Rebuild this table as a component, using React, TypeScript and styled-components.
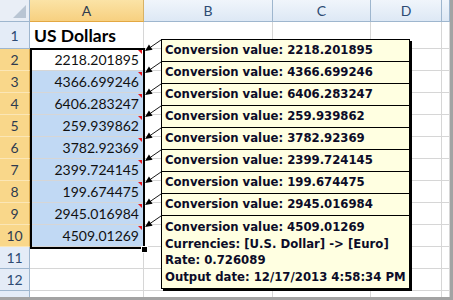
import styled, { createGlobalStyle } from 'styled-components'

const GlobalStyle = createGlobalStyle`
  html, body {
    margin: 0;
    padding: 0;
    background: #a3a3a3;
  }
  body {
    width: 453px;
    height: 300px;
    overflow: hidden;
  }
`

const gridLine = '#d6d6d6'
const headLine = '#9eb6ce'

const Wrap = styled.div`
  position: relative;
  width: 450px;
  height: 297px;
  background: #fff;
  overflow: hidden;
`

const Sheet = styled.div`
  display: grid;
  grid-template-columns: 30px 114px 129px 98px 71px 8px;
  grid-template-rows: 22px 27px repeat(11, 22px) 8px;
  font-family: Lato, "Open Sans", sans-serif;
`

const Corner = styled.div`
  position: relative;
  background: #e9eef6;
  border-right: 1px solid ${headLine};
  border-bottom: 1px solid ${headLine};
  &::after {
    content: '';
    position: absolute;
    right: 3px;
    bottom: 3px;
    border-left: 13px solid transparent;
    border-bottom: 13px solid #b9c5d3;
  }
`

const ColHead = styled.div<{ $active?: boolean }>`
  display: flex;
  align-items: center;
  justify-content: center;
  font-size: 14px;
  color: ${p => (p.$active ? '#2f3b4f' : '#2d4a73')};
  background: ${p =>
    p.$active
      ? 'linear-gradient(#fbe3a6, #f7d080)'
      : 'linear-gradient(#f0f5fb, #dde8f5)'};
  border-right: 1px solid ${p => (p.$active ? '#d8b265' : headLine)};
  border-bottom: 1px solid ${p => (p.$active ? '#e3a842' : headLine)};
`

const RowHead = styled.div<{ $active?: boolean }>`
  display: flex;
  align-items: center;
  justify-content: center;
  font-size: 14px;
  color: ${p => (p.$active ? '#2f3b4f' : '#2d4a73')};
  background: ${p => (p.$active ? '#f9d78a' : '#e4ecf7')};
  border-right: 1px solid ${p => (p.$active ? '#d8a84c' : headLine)};
  border-bottom: 1px solid ${p => (p.$active ? '#fbe6b6' : headLine)};
`

const Cell = styled.div<{ $fill?: string; $note?: boolean }>`
  position: relative;
  display: flex;
  align-items: center;
  justify-content: flex-end;
  padding-right: 4px;
  font-size: 14px;
  color: #111;
  background: ${p => p.$fill || '#fff'};
  border-right: 1px solid ${gridLine};
  border-bottom: 1px solid ${gridLine};
  &::after {
    content: '';
    display: ${p => (p.$note ? 'block' : 'none')};
    position: absolute;
    top: 1px;
    right: 1px;
    border-left: 4px solid transparent;
    border-top: 4px solid #e8141b;
  }
`

const Title = styled(Cell)`
  justify-content: flex-start;
  padding-left: 4px;
  font-size: 17.5px;
  font-weight: 700;
  color: #000;
`

const Selection = styled.div`
  position: absolute;
  left: 30px;
  top: 48px;
  width: 115px;
  height: 201px;
  box-sizing: border-box;
  border: 2.5px solid #000;
  pointer-events: none;
`

const FillHandle = styled.div`
  position: absolute;
  left: 141px;
  top: 246px;
  width: 5px;
  height: 5px;
  background: #000;
  border: 1px solid #fff;
`

const Notes = styled.div`
  position: absolute;
  left: 161px;
  top: 39px;
  width: 249px;
  display: flex;
  flex-direction: column;
`

const Note = styled.div<{ $tall?: boolean }>`
  box-sizing: border-box;
  min-height: 23px;
  margin-top: -1px;
  padding: ${p => (p.$tall ? '3px 0 3px 3px' : '0 0 0 3px')};
  display: flex;
  flex-direction: column;
  justify-content: center;
  background: #ffffe1;
  border: 1px solid #000;
  box-shadow: 2px 2px 0 #000;
  font-family: "DejaVu Sans", Verdana, sans-serif;
  font-size: 11.7px;
  font-weight: 700;
  line-height: 16.5px;
  color: #0c0c28;
  white-space: nowrap;
  &:first-child {
    margin-top: 0;
  }
`

const Arrows = styled.svg`
  position: absolute;
  left: 0;
  top: 0;
  pointer-events: none;
`

const values = [
  '2218.201895',
  '4366.699246',
  '6406.283247',
  '259.939862',
  '3782.92369',
  '2399.724145',
  '199.674475',
  '2945.016984',
  '4509.01269',
]

const cols = ['A', 'B', 'C', 'D', '']

function Arrow({ k }: { k: number }) {
  const sx = 161
  const sy = 40 + 22 * k
  const tx = 145
  const ty = 51 + 22 * k
  const dx = tx - sx
  const dy = ty - sy
  const len = Math.hypot(dx, dy)
  const ux = dx / len
  const uy = dy / len
  const bx = tx - ux * 7
  const by = ty - uy * 7
  const head = `${tx},${ty} ${bx - uy * 3.2},${by + ux * 3.2} ${bx + uy * 3.2},${by - ux * 3.2}`
  return (
    <g>
      <line x1={sx} y1={sy} x2={bx} y2={by} stroke="#000" strokeWidth={0.9} />
      <polygon points={head} fill="#000" />
    </g>
  )
}

function App() {
  const rows = Array.from({ length: 13 }, (_, i) => i + 1)
  return (
    <>
      <GlobalStyle />
      <Wrap>
        <Sheet>
          <Corner />
          {cols.map((c, i) => (
            <ColHead key={'h' + i} $active={c === 'A'}>{c}</ColHead>
          ))}
          {rows.map(r => {
            const inSel = r >= 2 && r <= 10
            return [
              <RowHead key={'r' + r} $active={inSel}>{r < 13 ? r : ''}</RowHead>,
              r === 1 ? (
                <Title key={'a' + r}>US Dollars</Title>
              ) : (
                <Cell key={'a' + r} $note={inSel} $fill={inSel && r > 2 ? '#c1d9f4' : undefined}>
                  {inSel ? values[r - 2] : ''}
                </Cell>
              ),
              <Cell key={'b' + r} />,
              <Cell key={'c' + r} />,
              <Cell key={'d' + r} />,
              <Cell key={'e' + r} />,
            ]
          })}
        </Sheet>

        <Selection />
        <FillHandle />

        <Arrows width={450} height={297}>
          {values.map((_, k) => (
            <Arrow key={k} k={k} />
          ))}
        </Arrows>

        <Notes>
          {values.slice(0, 8).map(v => (
            <Note key={v}>Conversion value: {v}</Note>
          ))}
          <Note $tall>
            <span>Conversion value: 4509.01269</span>
            <span>Currencies: [U.S. Dollar] -&gt; [Euro]</span>
            <span>Rate: 0.726089</span>
            <span>Output date: 12/17/2013 4:58:34 PM</span>
          </Note>
        </Notes>
      </Wrap>
    </>
  )
}

export default App
